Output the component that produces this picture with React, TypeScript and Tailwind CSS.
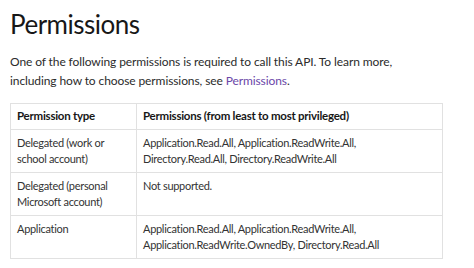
const rows = [
  {
    type: "Delegated (work or school account)",
    perms: "Application.Read.All, Application.ReadWrite.All, Directory.Read.All, Directory.ReadWrite.All",
  },
  { type: "Delegated (personal Microsoft account)", perms: "Not supported." },
  {
    type: "Application",
    perms: "Application.Read.All, Application.ReadWrite.All, Application.ReadWrite.OwnedBy, Directory.Read.All",
  },
];

export default function App() {
  return (
    <div
      className="h-[268px] w-[474px] overflow-hidden bg-white px-[10px] text-[#171717]"
      style={{ fontFamily: 'Lato, "Open Sans", sans-serif' }}
    >
      <h2 className="pt-[6px] text-[26px] leading-[36px] font-normal tracking-[-0.5px]">Permissions</h2>
      <p className="mt-[10px] text-[12px] leading-[19px] tracking-[-0.1px] text-[#2b2b2b]">
        One of the following permissions is required to call this API. To learn more,
        <br />
        including how to choose permissions, see <a className="text-[#6b47a8]">Permissions</a>.
      </p>
      <table className="mt-[13px] w-[433px] border-collapse text-[11px] leading-[16px] tracking-[-0.3px]">
        <thead>
          <tr>
            <th className="w-[126px] border border-[#e1e1e1] px-[6px] pt-[4px] pb-[5px] text-left text-[11.5px] font-bold tracking-[-0.25px] text-[#171717]">
              Permission type
            </th>
            <th className="border border-[#e1e1e1] px-[6px] pt-[4px] pb-[5px] text-left text-[11.5px] font-bold tracking-[-0.25px] text-[#171717]">
              Permissions (from least to most privileged)
            </th>
          </tr>
        </thead>
        <tbody>
          {rows.map((r) => (
            <tr key={r.type}>
              <td className="border border-[#e1e1e1] px-[6px] py-[5px] align-top text-[#333]">{r.type}</td>
              <td className="border border-[#e1e1e1] px-[6px] py-[5px] align-top text-[#333]">{r.perms}</td>
            </tr>
          ))}
        </tbody>
      </table>
    </div>
  );
}
